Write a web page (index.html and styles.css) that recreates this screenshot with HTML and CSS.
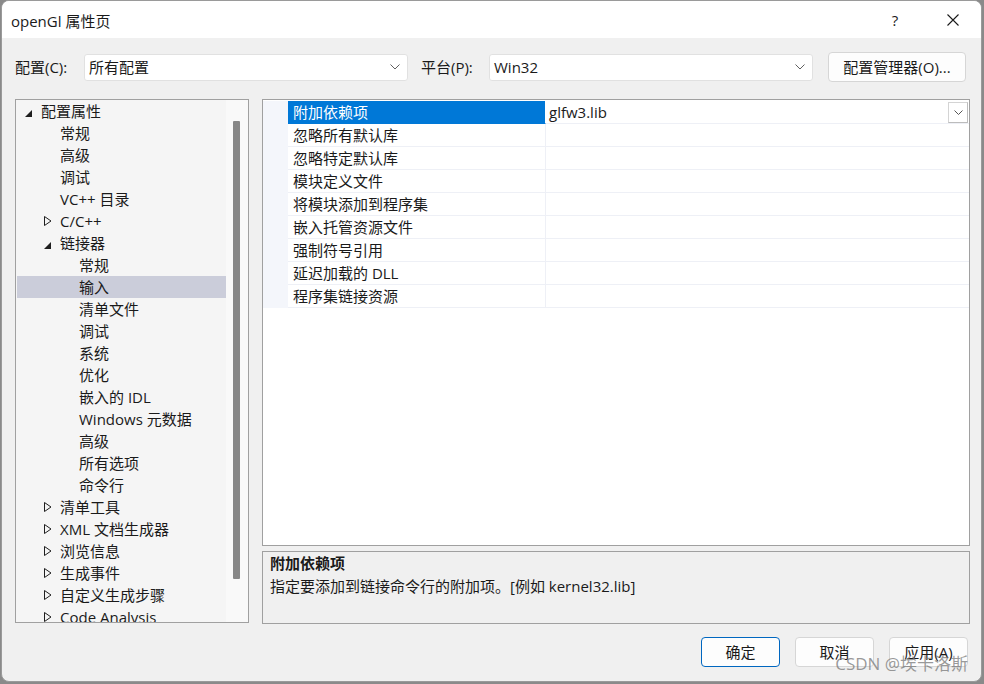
FILE: index.html
```html
<!DOCTYPE html>
<html lang="zh-CN">
<head>
  <meta charset="UTF-8">
  <title>openGl 属性页</title>
  <link rel="stylesheet" href="styles.css">
</head>
<body>
  <div class="window">
    <div class="titlebar">
      <span class="title">openGl 属性页</span>
      <span class="help">?</span>
      <span class="close">
        <svg width="12" height="12" viewBox="0 0 12 12"><path d="M0.5 0.5L11.5 11.5M11.5 0.5L0.5 11.5" stroke="#1a1a1a" stroke-width="1.1" fill="none"/></svg>
      </span>
    </div>

    <div class="toolbar">
      <span class="field-label label-config">配置(C):</span>
      <div class="combo">
        <span>所有配置</span>
        <svg class="chev" width="10" height="6" viewBox="0 0 10 6"><path d="M0.5 0.5L5 5L9.5 0.5" stroke="#606060" fill="none"/></svg>
      </div>
      <span class="field-label label-platform">平台(P):</span>
      <div class="combo">
        <span>Win32</span>
        <svg class="chev" width="10" height="6" viewBox="0 0 10 6"><path d="M0.5 0.5L5 5L9.5 0.5" stroke="#606060" fill="none"/></svg>
      </div>
      <button class="btn btn-manager">配置管理器(O)...</button>
    </div>

    <div class="main">
      <div class="tree">
        <ul class="tree-list">
          <li class="node lvl0"><span class="arrow"><svg class="open" width="7" height="7" viewBox="0 0 7 7"><path d="M7 0V7H0Z" fill="#1e1e1e"/></svg></span>配置属性</li>
          <li class="node lvl1"><span class="arrow"></span>常规</li>
          <li class="node lvl1"><span class="arrow"></span>高级</li>
          <li class="node lvl1"><span class="arrow"></span>调试</li>
          <li class="node lvl1"><span class="arrow"></span>VC++ 目录</li>
          <li class="node lvl1"><span class="arrow"><svg width="8" height="10" viewBox="0 0 8 10"><path d="M0.5 0.5L7 5L0.5 9.5Z" fill="none" stroke="#1e1e1e"/></svg></span>C/C++</li>
          <li class="node lvl1"><span class="arrow"><svg class="open" width="7" height="7" viewBox="0 0 7 7"><path d="M7 0V7H0Z" fill="#1e1e1e"/></svg></span>链接器</li>
          <li class="node lvl2"><span class="arrow"></span>常规</li>
          <li class="node lvl2 selected"><span class="arrow"></span>输入</li>
          <li class="node lvl2"><span class="arrow"></span>清单文件</li>
          <li class="node lvl2"><span class="arrow"></span>调试</li>
          <li class="node lvl2"><span class="arrow"></span>系统</li>
          <li class="node lvl2"><span class="arrow"></span>优化</li>
          <li class="node lvl2"><span class="arrow"></span>嵌入的 IDL</li>
          <li class="node lvl2"><span class="arrow"></span>Windows 元数据</li>
          <li class="node lvl2"><span class="arrow"></span>高级</li>
          <li class="node lvl2"><span class="arrow"></span>所有选项</li>
          <li class="node lvl2"><span class="arrow"></span>命令行</li>
          <li class="node lvl1"><span class="arrow"><svg width="8" height="10" viewBox="0 0 8 10"><path d="M0.5 0.5L7 5L0.5 9.5Z" fill="none" stroke="#1e1e1e"/></svg></span>清单工具</li>
          <li class="node lvl1"><span class="arrow"><svg width="8" height="10" viewBox="0 0 8 10"><path d="M0.5 0.5L7 5L0.5 9.5Z" fill="none" stroke="#1e1e1e"/></svg></span>XML 文档生成器</li>
          <li class="node lvl1"><span class="arrow"><svg width="8" height="10" viewBox="0 0 8 10"><path d="M0.5 0.5L7 5L0.5 9.5Z" fill="none" stroke="#1e1e1e"/></svg></span>浏览信息</li>
          <li class="node lvl1"><span class="arrow"><svg width="8" height="10" viewBox="0 0 8 10"><path d="M0.5 0.5L7 5L0.5 9.5Z" fill="none" stroke="#1e1e1e"/></svg></span>生成事件</li>
          <li class="node lvl1"><span class="arrow"><svg width="8" height="10" viewBox="0 0 8 10"><path d="M0.5 0.5L7 5L0.5 9.5Z" fill="none" stroke="#1e1e1e"/></svg></span>自定义生成步骤</li>
          <li class="node lvl1"><span class="arrow"><svg width="8" height="10" viewBox="0 0 8 10"><path d="M0.5 0.5L7 5L0.5 9.5Z" fill="none" stroke="#1e1e1e"/></svg></span>Code Analysis</li>
        </ul>
        <div class="scroll"><div class="thumb"></div></div>
      </div>

      <div class="right">
        <div class="grid">
          <div class="prow">
            <div class="gutter"></div>
            <div class="pname selected">附加依赖项</div>
            <div class="pval">
              <span>glfw3.lib</span>
              <span class="drop"><svg width="9" height="5" viewBox="0 0 9 5"><path d="M0.5 0.5L4.5 4.5L8.5 0.5" stroke="#555" fill="none"/></svg></span>
            </div>
          </div>
          <div class="prow"><div class="gutter"></div><div class="pname">忽略所有默认库</div><div class="pval"></div></div>
          <div class="prow"><div class="gutter"></div><div class="pname">忽略特定默认库</div><div class="pval"></div></div>
          <div class="prow"><div class="gutter"></div><div class="pname">模块定义文件</div><div class="pval"></div></div>
          <div class="prow"><div class="gutter"></div><div class="pname">将模块添加到程序集</div><div class="pval"></div></div>
          <div class="prow"><div class="gutter"></div><div class="pname">嵌入托管资源文件</div><div class="pval"></div></div>
          <div class="prow"><div class="gutter"></div><div class="pname">强制符号引用</div><div class="pval"></div></div>
          <div class="prow"><div class="gutter"></div><div class="pname">延迟加载的 DLL</div><div class="pval"></div></div>
          <div class="prow"><div class="gutter"></div><div class="pname">程序集链接资源</div><div class="pval"></div></div>
        </div>
        <div class="desc">
          <div class="desc-title">附加依赖项</div>
          <div class="desc-text">指定要添加到链接命令行的附加项。[例如 kernel32.lib]</div>
        </div>
      </div>
    </div>

    <div class="footer">
      <button class="btn btn-default">确定</button>
      <button class="btn">取消</button>
      <button class="btn">应用(A)</button>
    </div>

    <div class="watermark">CSDN @埃卡洛斯</div>
  </div>
</body>
</html>
```

FILE: styles.css
```css
body {
  margin: 0;
  background: #8a8a8a;
  font-family: "Open Sans", "Noto Sans CJK SC", sans-serif;
  font-size: 15px;
  color: #1a1a1a;
}
.window {
  position: relative;
  margin-left: 1px;
  width: 981px;
  height: 682px;
  box-sizing: border-box;
  border: 1px solid #9a9a9a;
  border-radius: 8px;
  background: #f0f0f0;
  overflow: hidden;
  display: flex;
  flex-direction: column;
}

/* title bar */
.titlebar {
  height: 37px;
  flex: none;
  background: #fff;
  display: flex;
  align-items: center;
  padding-left: 9px;
}
.title {
  flex: 1;
  line-height: 20px;
  margin-top: 2px;
}
.help {
  width: 20px;
  text-align: center;
  margin-right: 42px;
  font-size: 15px;
}
.close {
  width: 12px;
  height: 12px;
  margin-right: 22px;
  display: flex;
}

/* config row */
.toolbar {
  flex: none;
  display: flex;
  align-items: center;
  height: 30px;
  margin-top: 14px;
  padding-left: 13px;
}
.field-label {
  line-height: 20px;
}
.label-config {
  width: 69px;
}
.label-platform {
  width: 68px;
  margin-left: 13px;
}
.combo {
  width: 324px;
  height: 27px;
  box-sizing: border-box;
  background: #fff;
  border: 1px solid #e1e1e1;
  border-radius: 3px;
  display: flex;
  align-items: center;
  justify-content: space-between;
  padding: 0 7px 0 4px;
  line-height: 20px;
}
.btn {
  font-family: inherit;
  font-size: 15px;
  color: #1a1a1a;
  background: #fdfdfd;
  border: 1px solid #d6d6d6;
  border-radius: 4px;
  height: 30px;
  padding: 0;
  line-height: 20px;
}
.btn-manager {
  width: 138px;
  margin-left: 15px;
}

/* tree + grid */
.main {
  flex: none;
  display: flex;
  height: 525px;
  margin-top: 17px;
  padding-left: 13px;
}
.tree {
  width: 234px;
  height: 524px;
  box-sizing: border-box;
  border: 1px solid #a0a0a0;
  background: #f5f5f5;
  display: flex;
  overflow: hidden;
}
.tree-list {
  list-style: none;
  margin: 0;
  padding: 0 0 0 1px;
  flex: 1;
}
.node {
  height: 22px;
  line-height: 22px;
  display: flex;
  align-items: center;
  white-space: nowrap;
}
.node.selected {
  background: #cbcdda;
}
.lvl0 { padding-left: 8px; }
.lvl1 { padding-left: 27px; }
.lvl2 { padding-left: 46px; }
.arrow {
  width: 16px;
  flex: none;
  display: flex;
  align-items: center;
}
.arrow .open {
  margin-top: 4px;
}
.scroll {
  width: 22px;
  flex: none;
  background: #f9f9f9;
  padding-top: 21px;
}
.thumb {
  width: 7px;
  height: 458px;
  margin-left: 7px;
  background: #878787;
  border-radius: 1px;
}

.right {
  width: 708px;
  margin-left: 13px;
  display: flex;
  flex-direction: column;
}
.grid {
  height: 448px;
  box-sizing: border-box;
  border: 1px solid #a0a0a0;
  background: #fff;
  padding-top: 1px;
}
.prow {
  display: flex;
  height: 23px;
}
.gutter {
  width: 25px;
  background: #f4f6fb;
}
.pname {
  width: 258px;
  box-sizing: border-box;
  padding-left: 5px;
  line-height: 22px;
  border-bottom: 1px solid #eef0f6;
  border-right: 1px solid #eef0f6;
  white-space: nowrap;
}
.pname.selected {
  background: #0078d7;
  color: #fff;
  border-bottom-color: #0078d7;
  border-right-color: #fff;
}
.pval {
  flex: 1;
  display: flex;
  align-items: center;
  justify-content: space-between;
  padding-left: 3px;
  line-height: 22px;
  border-bottom: 1px solid #eef0f6;
}
.drop {
  width: 20px;
  height: 21px;
  box-sizing: border-box;
  border: 1px solid #d4d4d4;
  border-right-color: #bcbcbc;
  border-bottom-color: #bcbcbc;
  background: #fff;
  margin-right: 1px;
  display: flex;
  align-items: center;
  justify-content: center;
}
.desc {
  height: 73px;
  margin-top: 5px;
  box-sizing: border-box;
  border: 1px solid #a0a0a0;
  background: #f0f0f0;
  padding-left: 7px;
  line-height: 23px;
}
.desc-title {
  font-weight: bold;
}

/* buttons */
.footer {
  flex: none;
  display: flex;
  justify-content: flex-end;
  gap: 15px;
  height: 30px;
  margin-top: 13px;
  padding-right: 13px;
}
.footer .btn {
  width: 79px;
}
.btn-default {
  border-color: #0067c0;
  width: 80px;
}

.watermark {
  position: absolute;
  right: 13px;
  bottom: 6px;
  font-size: 17px;
  line-height: 22px;
  color: rgba(120, 120, 120, 0.75);
  pointer-events: none;
}
```
